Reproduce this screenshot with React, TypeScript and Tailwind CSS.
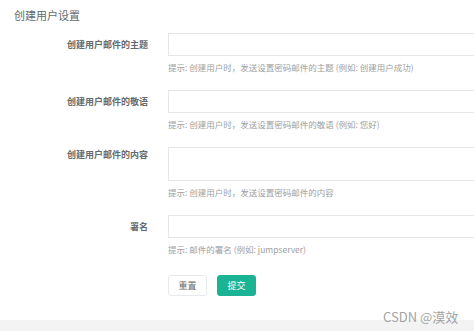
import React from 'react';

interface Field {
  label: string;
  hint: string;
  multiline?: boolean;
}

const fields: Field[] = [
  { label: '创建用户邮件的主题', hint: '提示: 创建用户时，发送设置密码邮件的主题 (例如: 创建用户成功)' },
  { label: '创建用户邮件的敬语', hint: '提示: 创建用户时，发送设置密码邮件的敬语 (例如: 您好)' },
  { label: '创建用户邮件的内容', hint: '提示: 创建用户时，发送设置密码邮件的内容', multiline: true },
  { label: '署名', hint: '提示: 邮件的署名 (例如: jumpserver)' },
];

const FormRow: React.FC<Field> = ({ label, hint, multiline }) => (
  <div className="flex pb-[17px]">
    <div
      className={`w-[168px] shrink-0 pr-[20px] text-right text-[9px] font-bold text-[#676a6c] ${
        multiline ? 'leading-[16px]' : 'leading-[23px]'
      }`}
    >
      {label}
    </div>
    <div className="w-[320px] shrink-0">
      {multiline ? (
        <textarea className="block h-[34px] w-full resize-none border border-[#e5e6e7] bg-white outline-none" />
      ) : (
        <input className="block h-[23px] w-full border border-[#e5e6e7] bg-white outline-none" />
      )}
      <p className="mt-[5px] text-[8.5px] leading-[12px] text-[#a0a0a0]">{hint}</p>
    </div>
  </div>
);

export default function App() {
  return (
    <div
      className="relative flex h-[331px] w-[474px] flex-col overflow-hidden bg-white"
      style={{ fontFamily: '"Noto Sans CJK SC", "Microsoft YaHei", sans-serif' }}
    >
      <h2 className="pl-[14px] pt-[8px] text-[11px] font-normal leading-[14px] text-[#676a6c]">创建用户设置</h2>

      <form className="mt-[11px]" onSubmit={(e) => e.preventDefault()}>
        {fields.map((f) => (
          <FormRow key={f.label} {...f} />
        ))}

        <div className="flex gap-[10px] pl-[168px] pt-[3px]">
          <button
            type="button"
            className="h-[21px] w-[39px] rounded-[3px] border border-[#e7eaec] bg-white text-[9px] text-[#676a6c]"
          >
            重置
          </button>
          <button
            type="submit"
            className="h-[21px] w-[39px] rounded-[3px] border border-[#1ab394] bg-[#1ab394] text-[9px] text-white"
          >
            提交
          </button>
        </div>
      </form>

      <div className="mt-auto h-[11px] bg-[#f3f3f4]" />

      <span className="absolute left-[383px] top-[309px] text-[13px] leading-[16px] text-[#a3a3a3]">CSDN @漠效</span>
    </div>
  );
}
